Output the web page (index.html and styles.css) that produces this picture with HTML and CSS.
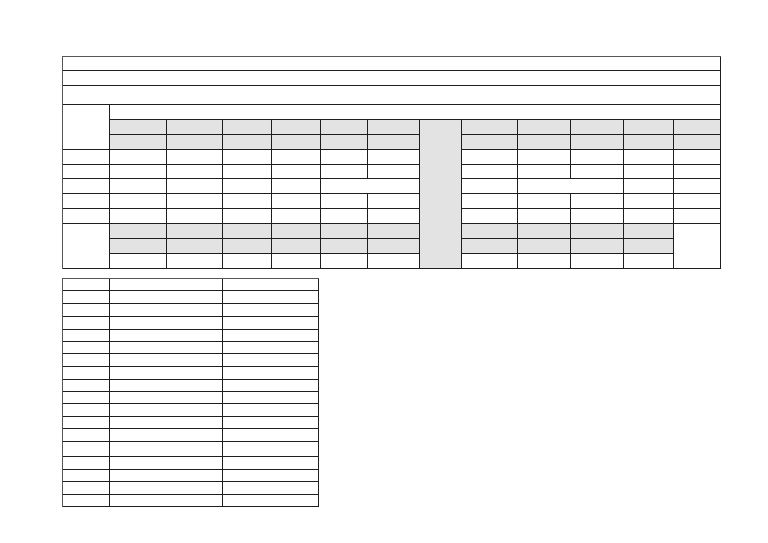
FILE: index.html
```html
<!DOCTYPE html>
<html>
<head>
<meta charset="utf-8">
<link rel="stylesheet" href="styles.css">
</head>
<body>
<div class="page">
  <div class="sheet main">
    <div class="c full"></div>
    <div class="c full"></div>
    <div class="c full"></div>

    <div class="c r3"></div>
    <div class="c s12"></div>

    <div class="c g"></div><div class="c g"></div><div class="c g"></div><div class="c g"></div><div class="c g"></div><div class="c g"></div>
    <div class="c g r10"></div>
    <div class="c g"></div><div class="c g"></div><div class="c g"></div><div class="c g"></div><div class="c g"></div>

    <div class="c g"></div><div class="c g"></div><div class="c g"></div><div class="c g"></div><div class="c g"></div><div class="c g"></div>
    <div class="c g"></div><div class="c g"></div><div class="c g"></div><div class="c g"></div><div class="c g"></div>

    <div class="c"></div>
    <div class="c"></div><div class="c"></div><div class="c"></div><div class="c"></div><div class="c"></div><div class="c"></div>
    <div class="c"></div><div class="c"></div><div class="c"></div><div class="c"></div><div class="c"></div>

    <div class="c"></div>
    <div class="c"></div><div class="c"></div><div class="c"></div><div class="c"></div><div class="c"></div><div class="c"></div>
    <div class="c"></div><div class="c"></div><div class="c"></div><div class="c"></div><div class="c"></div>

    <div class="c"></div>
    <div class="c"></div><div class="c"></div><div class="c"></div><div class="c"></div><div class="c s2"></div>
    <div class="c"></div><div class="c s2"></div><div class="c"></div><div class="c"></div>

    <div class="c"></div>
    <div class="c"></div><div class="c"></div><div class="c"></div><div class="c"></div><div class="c"></div><div class="c"></div>
    <div class="c"></div><div class="c"></div><div class="c"></div><div class="c"></div><div class="c"></div>

    <div class="c"></div>
    <div class="c"></div><div class="c"></div><div class="c"></div><div class="c"></div><div class="c"></div><div class="c"></div>
    <div class="c"></div><div class="c"></div><div class="c"></div><div class="c"></div><div class="c"></div>

    <div class="c r3"></div>
    <div class="c g"></div><div class="c g"></div><div class="c g"></div><div class="c g"></div><div class="c g"></div><div class="c g"></div>
    <div class="c g"></div><div class="c g"></div><div class="c g"></div><div class="c g"></div>
    <div class="c r3"></div>

    <div class="c g"></div><div class="c g"></div><div class="c g"></div><div class="c g"></div><div class="c g"></div><div class="c g"></div>
    <div class="c g"></div><div class="c g"></div><div class="c g"></div><div class="c g"></div>

    <div class="c"></div><div class="c"></div><div class="c"></div><div class="c"></div><div class="c"></div><div class="c"></div>
    <div class="c"></div><div class="c"></div><div class="c"></div><div class="c"></div>
  </div>

  <div class="sheet list">
    <div class="c"></div><div class="c"></div><div class="c"></div>
    <div class="c"></div><div class="c"></div><div class="c"></div>
    <div class="c"></div><div class="c"></div><div class="c"></div>
    <div class="c"></div><div class="c"></div><div class="c"></div>
    <div class="c"></div><div class="c"></div><div class="c"></div>
    <div class="c"></div><div class="c"></div><div class="c"></div>
    <div class="c"></div><div class="c"></div><div class="c"></div>
    <div class="c"></div><div class="c"></div><div class="c"></div>
    <div class="c"></div><div class="c"></div><div class="c"></div>
    <div class="c"></div><div class="c"></div><div class="c"></div>
    <div class="c"></div><div class="c"></div><div class="c"></div>
    <div class="c"></div><div class="c"></div><div class="c"></div>
    <div class="c"></div><div class="c"></div><div class="c"></div>
    <div class="c"></div><div class="c"></div><div class="c"></div>
    <div class="c"></div><div class="c"></div><div class="c"></div>
    <div class="c"></div><div class="c"></div><div class="c"></div>
    <div class="c"></div><div class="c"></div><div class="c"></div>
    <div class="c"></div><div class="c"></div><div class="c"></div>
  </div>
</div>
</body>
</html>
```

FILE: styles.css
```css
html, body {
  margin: 0;
  padding: 0;
  background: #ffffff;
  font-family: "Liberation Sans", Arial, sans-serif;
}

.page {
  padding: 56px 0 0 62px;
  display: flex;
  flex-direction: column;
  align-items: flex-start;
  gap: 9px;
}

.sheet {
  display: grid;
  border-left: 1px solid #555555;
  border-top: 1px solid #555555;
  background: #ffffff;
}

.main {
  grid-template-columns: 47px 57px 56px 49px 49px 47px 52px 42px 56px 53px 53px 50px 47px;
  grid-template-rows: 14px 15px 19px 15px 15px 15px 15px 14px 15px 15px 15px 15px 15px 15px;
}

.list {
  grid-template-columns: 47px 113px 96px;
  grid-template-rows: 12px 13px 13px 13px 12px 12px 13px 13px 12px 12px 13px 12px 13px 15px 13px 12px 13px 12px;
}

.c {
  box-sizing: border-box;
  border-right: 1px solid #1e1e1e;
  border-bottom: 1px solid #1e1e1e;
}

.g {
  background: #e3e3e3;
}

.full {
  grid-column: 1 / -1;
}

.s2 {
  grid-column: span 2;
}

.s12 {
  grid-column: span 12;
}

.r3 {
  grid-row: span 3;
}

.r10 {
  grid-row: span 10;
}
```
